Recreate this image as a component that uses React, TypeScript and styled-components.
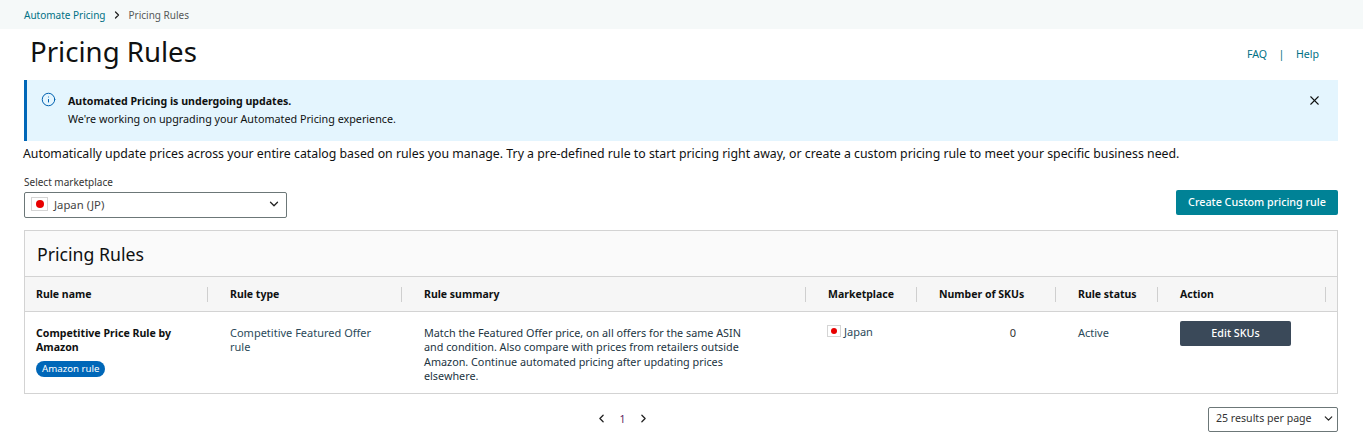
import styled, { createGlobalStyle } from 'styled-components';
import { ChevronDown, ChevronLeft, ChevronRight, Info, X } from 'lucide-react';

const GlobalStyle = createGlobalStyle`
    body {
        margin: 0;
        background: #fff;
        color: #0f1111;
        font-family: "Noto Sans", "Liberation Sans", sans-serif;
    }
`;

const COLUMNS = '183px 194px 404px 111px 139px 102px 168px 1fr';

const Breadcrumbs = styled.nav`
    height: 29px;
    padding-left: 24px;
    display: flex;
    align-items: center;
    gap: 5.5px;
    background: #f5f9f9;
    font-size: 10px;
`;

const Crumb = styled.span<{ $link?: boolean }>`
    color: ${(p) => (p.$link ? '#007185' : '#565959')};
`;

const Content = styled.main`
    padding: 0 25px 0 24px;
`;

const TitleRow = styled.header`
    height: 51px;
    padding: 0 19px 0 6px;
    display: flex;
    align-items: center;
    justify-content: space-between;
`;

const Title = styled.h1`
    margin: -8px 0 0;
    font-size: 27.6px;
    font-weight: 400;
    line-height: 48px;
`;

const HelpLinks = styled.div`
    display: flex;
    gap: 11.5px;
    margin-top: -2px;
    font-size: 10.6px;
    color: #007185;
`;

const Alert = styled.section`
    height: 61px;
    box-sizing: border-box;
    border-left: 3px solid #0067b8;
    background: #e4f5fe;
    padding: 12px 16px 0 14px;
    display: flex;
    gap: 12px;
    font-size: 10.77px;
    line-height: 18px;
`;

const AlertIcon = styled.span`
    height: 16px;
    color: #0061b0;
`;

const AlertText = styled.div`
    flex: 1;
`;

const AlertTitle = styled.div`
    font-weight: 700;
    font-size: 10.6px;
`;

const CloseIcon = styled.span`
    height: 15px;
    margin-top: 1px;
`;

const Intro = styled.p`
    margin: 5px 0 0 -1px;
    font-size: 12.32px;
    line-height: 16px;
    white-space: nowrap;
`;

const Controls = styled.div`
    margin-top: 13px;
    display: flex;
    align-items: flex-end;
    justify-content: space-between;
`;

const Label = styled.label`
    display: block;
    margin-bottom: 3px;
    font-size: 10px;
    line-height: 14px;
    color: #333;
`;

const SelectBox = styled.div`
    width: 263px;
    height: 26px;
    box-sizing: border-box;
    border: 1px solid #6c7778;
    border-radius: 2px;
    padding: 0 5px 2px 6px;
    display: flex;
    align-items: center;
    gap: 6px;
    font-size: 11.3px;
    color: #444;
`;

const Flag = styled.span<{ $small?: boolean }>`
    box-sizing: border-box;
    width: ${(p) => (p.$small ? 14 : 17)}px;
    height: ${(p) => (p.$small ? 12 : 14)}px;
    border: 1px solid #d5d5d5;
    display: flex;
    align-items: center;
    justify-content: center;
    flex: none;

    &::after {
        content: '';
        width: ${(p) => (p.$small ? 6 : 8)}px;
        height: ${(p) => (p.$small ? 6 : 8)}px;
        border-radius: 50%;
        background: #e80000;
    }
`;

const Grow = styled.span`
    flex: 1;
`;

const Button = styled.button<{ $dark?: boolean }>`
    height: 25px;
    border: none;
    border-radius: 2px;
    padding: 0 0 2px;
    color: #fff;
    font-family: inherit;
    font-size: 10.75px;
    font-weight: 500;
    background: ${(p) => (p.$dark ? '#3a4959' : '#008296')};
`;

const CreateButton = styled(Button)`
    width: 162px;
    margin-bottom: 3px;
`;

const Panel = styled.section`
    margin-top: 12px;
    height: 164px;
    box-sizing: border-box;
    border: 1px solid #d3d3d3;
`;

const PanelTitle = styled.h2`
    margin: 0;
    height: 46px;
    box-sizing: border-box;
    padding-left: 12px;
    background: #fafafa;
    border-bottom: 1px solid #d3d3d3;
    font-size: 17.7px;
    font-weight: 400;
    line-height: 47px;
`;

const HeadRow = styled.div`
    height: 35px;
    box-sizing: border-box;
    display: grid;
    grid-template-columns: ${COLUMNS};
    align-items: center;
    background: #f6f6f6;
    border-bottom: 1px solid #d3d3d3;
`;

const HeadCell = styled.div<{ $first?: boolean }>`
    height: 15px;
    padding-left: ${(p) => (p.$first ? 11 : 22)}px;
    border-right: 1px solid #cfcfcf;
    font-size: 10.5px;
    font-weight: 700;
    line-height: 15px;
`;

const BodyRow = styled.div`
    display: grid;
    grid-template-columns: ${COLUMNS};
    padding-top: 14px;
    font-size: 11px;
    line-height: 14.5px;
`;

const Cell = styled.div<{ $first?: boolean }>`
    padding-left: ${(p) => (p.$first ? 11 : 22)}px;
`;

const RuleName = styled.div`
    font-weight: 700;
    font-size: 10.6px;
    line-height: 14px;
    width: 150px;
`;

const Badge = styled.span`
    display: inline-block;
    margin-top: 7px;
    height: 16px;
    padding: 0 5px 0 6px;
    border-radius: 8px;
    background: #0067b8;
    color: #fff;
    font-size: 9.7px;
    line-height: 16px;
`;

const RuleType = styled.div`
    color: #2b4a5a;
    line-height: 14px;
    width: 150px;
`;

const Summary = styled.div`
    width: 325px;
    font-size: 10.8px;
    line-height: 14.4px;
    color: #22343f;
`;

const CountryCell = styled(Cell)`
    display: flex;
    gap: 3px;
    margin-left: -1px;
    margin-top: -1px;
    color: #2b4a5a;
    height: 14px;
`;

const Count = styled(Cell)`
    text-align: right;
    padding-right: 40px;
    color: #333;
`;

const Status = styled(Cell)`
    color: #2b4a5a;
`;

const EditButton = styled(Button)`
    display: block;
    width: 111px;
    margin-top: -5px;
`;

const Footer = styled.footer`
    margin-top: 13px;
    display: flex;
    align-items: center;
`;

const Pager = styled.div`
    flex: 1;
    padding: 0 0 2px 13px;
    display: flex;
    align-items: center;
    justify-content: center;
    gap: 11.5px;
    font-size: 10.5px;
    color: #5f1f5f;
`;

const PerPage = styled.div`
    width: 130px;
    height: 25px;
    box-sizing: border-box;
    border: 1px solid #6c7778;
    border-radius: 2px;
    padding: 0 2px 3px 7px;
    display: flex;
    align-items: center;
    justify-content: space-between;
    font-size: 10.6px;
    color: #333;
`;

const App = () => (
    <>
        <GlobalStyle />
        <Breadcrumbs>
            <Crumb $link>Automate Pricing</Crumb>
            <ChevronRight size={12} strokeWidth={2.5} color="#222" />
            <Crumb>Pricing Rules</Crumb>
        </Breadcrumbs>
        <Content>
            <TitleRow>
                <Title>Pricing Rules</Title>
                <HelpLinks>
                    <span>FAQ</span>
                    <span>|</span>
                    <span>Help</span>
                </HelpLinks>
            </TitleRow>
            <Alert>
                <AlertIcon>
                    <Info size={15} strokeWidth={1.6} />
                </AlertIcon>
                <AlertText>
                    <AlertTitle>Automated Pricing is undergoing updates.</AlertTitle>
                    We're working on upgrading your Automated Pricing experience.
                </AlertText>
                <CloseIcon>
                    <X size={15} strokeWidth={1.7} />
                </CloseIcon>
            </Alert>
            <Intro>
                Automatically update prices across your entire catalog based on rules you manage. Try a pre-defined rule to
                start pricing right away, or create a custom pricing rule to meet your specific business need.
            </Intro>
            <Controls>
                <div>
                    <Label>Select marketplace</Label>
                    <SelectBox>
                        <Flag />
                        <Grow>Japan (JP)</Grow>
                        <ChevronDown size={14} strokeWidth={2.2} color="#222" />
                    </SelectBox>
                </div>
                <CreateButton>Create Custom pricing rule</CreateButton>
            </Controls>
            <Panel>
                <PanelTitle>Pricing Rules</PanelTitle>
                <HeadRow>
                    <HeadCell $first>Rule name</HeadCell>
                    <HeadCell>Rule type</HeadCell>
                    <HeadCell>Rule summary</HeadCell>
                    <HeadCell>Marketplace</HeadCell>
                    <HeadCell>Number of SKUs</HeadCell>
                    <HeadCell>Rule status</HeadCell>
                    <HeadCell>Action</HeadCell>
                </HeadRow>
                <BodyRow>
                    <Cell $first>
                        <RuleName>Competitive Price Rule by Amazon</RuleName>
                        <Badge>Amazon rule</Badge>
                    </Cell>
                    <Cell>
                        <RuleType>Competitive Featured Offer rule</RuleType>
                    </Cell>
                    <Cell>
                        <Summary>
                            Match the Featured Offer price, on all offers for the same ASIN and condition. Also compare with
                            prices from retailers outside Amazon. Continue automated pricing after updating prices elsewhere.
                        </Summary>
                    </Cell>
                    <CountryCell>
                        <Flag $small />
                        Japan
                    </CountryCell>
                    <Count>0</Count>
                    <Status>Active</Status>
                    <Cell>
                        <EditButton $dark>Edit SKUs</EditButton>
                    </Cell>
                </BodyRow>
            </Panel>
            <Footer>
                <Pager>
                    <ChevronLeft size={13} strokeWidth={2.4} color="#222" />
                    1
                    <ChevronRight size={13} strokeWidth={2.4} color="#222" />
                </Pager>
                <PerPage>
                    25 results per page
                    <ChevronDown size={13} strokeWidth={2.2} color="#222" />
                </PerPage>
            </Footer>
        </Content>
    </>
);

export default App;
